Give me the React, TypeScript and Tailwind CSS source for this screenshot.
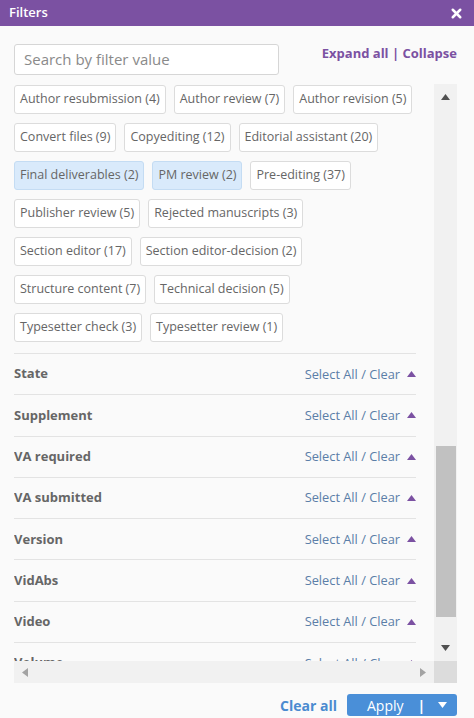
import { X } from "lucide-react";

const chips: { label: string; selected?: boolean }[] = [
  { label: "Author resubmission (4)" },
  { label: "Author review (7)" },
  { label: "Author revision (5)" },
  { label: "Convert files (9)" },
  { label: "Copyediting (12)" },
  { label: "Editorial assistant (20)" },
  { label: "Final deliverables (2)", selected: true },
  { label: "PM review (2)", selected: true },
  { label: "Pre-editing (37)" },
  { label: "Publisher review (5)" },
  { label: "Rejected manuscripts (3)" },
  { label: "Section editor (17)" },
  { label: "Section editor-decision (2)" },
  { label: "Structure content (7)" },
  { label: "Technical decision (5)" },
  { label: "Typesetter check (3)" },
  { label: "Typesetter review (1)" },
];

const sections = [
  "State",
  "Supplement",
  "VA required",
  "VA submitted",
  "Version",
  "VidAbs",
  "Video",
  "Volume",
];

function Caret({ className }: { className?: string }) {
  return (
    <svg width="9" height="6" viewBox="0 0 9 6" className={className}>
      <path d="M0 6 L4.5 0 L9 6 Z" fill="currentColor" />
    </svg>
  );
}

export default function App() {
  return (
    <div
      className="w-[474px] h-[718px] flex flex-col bg-[#fafafa] overflow-hidden"
      style={{ fontFamily: '"Open Sans", "Noto Sans", sans-serif' }}
    >
      {/* header */}
      <div className="h-[26px] shrink-0 bg-[#7b51a2] flex items-center justify-between pl-[9px] pr-[10px]">
        <span className="text-white text-[13px] font-semibold">Filters</span>
        <X className="w-[15px] h-[15px] text-white" strokeWidth={4} />
      </div>

      <div className="flex-1 flex flex-col pl-[14px] pr-[17px]">
        {/* search row */}
        <div className="flex items-start justify-between mt-[18px]">
          <div className="w-[265px] h-[31px] bg-white border border-[#d6d6d6] rounded-[3px] flex items-center pl-[9px]">
            <span className="text-[15px] text-[#8a8a8a]">Search by filter value</span>
          </div>
          <div className="text-[13px] font-bold text-[#7b51a2] leading-[18px]">
            Expand all | Collapse
          </div>
        </div>

        {/* scroll frame */}
        <div className="mt-[9px] grid grid-cols-[420px_23px] grid-rows-[577px_22px]">
          <div className="overflow-hidden">
            <div className="pt-[1px] pr-[18px]">
              <div className="flex flex-wrap gap-x-[8px] gap-y-[9px]">
                {chips.map((c) => (
                  <div
                    key={c.label}
                    className={
                      c.selected
                        ? "h-[29px] px-[5px] flex items-center rounded-[3px] border border-[#c4dcf3] bg-[#d9eafb] text-[12.5px] text-[#666]"
                        : "h-[29px] px-[5px] flex items-center rounded-[3px] border border-[#dcdcdc] bg-white text-[12.5px] text-[#666]"
                    }
                  >
                    {c.label}
                  </div>
                ))}
              </div>
              <div className="mt-[11px]">
                {sections.map((s) => (
                  <div
                    key={s}
                    className="h-[41.3px] border-t border-[#e3e3e3] flex items-center justify-between"
                  >
                    <span className="text-[13px] font-bold text-[#666]">{s}</span>
                    <span className="flex items-center gap-[7px]">
                      <span className="text-[12.8px] text-[#5b7ea8]">Select All / Clear</span>
                      <Caret className="text-[#7b51a2]" />
                    </span>
                  </div>
                ))}
              </div>
            </div>
          </div>

          {/* vertical scrollbar */}
          <div className="bg-[#f1f1f1] flex flex-col items-center">
            <Caret className="text-[#505050] mt-[10px]" />
            <div className="w-[20px] h-[171px] bg-[#c1c1c1] mt-[346px]" />
            <Caret className="text-[#505050] mt-[28px] rotate-180" />
          </div>

          {/* horizontal scrollbar */}
          <div className="bg-[#f1f1f1] flex items-center justify-between px-[8px]">
            <svg width="6" height="9" viewBox="0 0 6 9">
              <path d="M6 0 L0 4.5 L6 9 Z" fill="#a3a3a3" />
            </svg>
            <svg width="6" height="9" viewBox="0 0 6 9">
              <path d="M0 0 L6 4.5 L0 9 Z" fill="#a3a3a3" />
            </svg>
          </div>
          <div className="bg-[#dcdcdc]" />
        </div>

        {/* footer */}
        <div className="flex items-center justify-end gap-[10px] mt-[11px]">
          <span className="text-[14px] font-bold text-[#4a8bd0]">Clear all</span>
          <div className="w-[110px] h-[22px] rounded-[3px] bg-[#4a8fd8] flex items-center text-white text-[14px]">
            <span className="ml-[20px]">Apply</span>
            <span className="ml-[14px] font-bold">|</span>
            <Caret className="ml-[13px] rotate-180 text-white" />
          </div>
        </div>
      </div>
    </div>
  );
}
